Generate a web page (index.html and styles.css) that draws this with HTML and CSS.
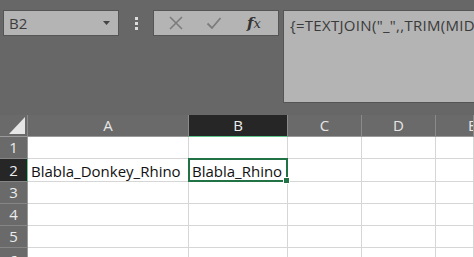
FILE: index.html
```html
<!DOCTYPE html>
<html>
<head>
<meta charset="utf-8">
<link rel="stylesheet" href="styles.css">
</head>
<body>
<div class="toolbar">
  <div class="namebox">
    <span class="name">B2</span>
    <svg class="caret" width="7" height="4" viewBox="0 0 7 4"><path d="M0 0 H7 L3.5 4 Z" fill="#444"/></svg>
  </div>
  <div class="grip"><span></span><span></span><span></span></div>
  <div class="fxbox">
    <svg class="ico" width="16" height="16" viewBox="0 0 16 16"><path d="M2 2 L14 14 M14 2 L2 14" stroke="#7c7c7c" stroke-width="1.6" fill="none"/></svg>
    <svg class="ico" width="16" height="16" viewBox="0 0 16 16"><path d="M1.5 8.5 L6 13 L14.5 3" stroke="#7c7c7c" stroke-width="1.8" fill="none"/></svg>
    <span class="fx">f<i>x</i></span>
  </div>
  <div class="formula">{=TEXTJOIN("_",,TRIM(MID(</div>
</div>
<div class="sheet">
  <div class="corner"><span class="tri"></span></div>
  <div class="ch">A</div>
  <div class="ch sel">B</div>
  <div class="ch">C</div>
  <div class="ch">D</div>
  <div class="ch last">E</div>

  <div class="rh">1</div>
  <div class="c"></div><div class="c"></div><div class="c"></div><div class="c"></div><div class="c"></div>

  <div class="rh sel r2">2</div>
  <div class="c r2">Blabla_Donkey_Rhino</div>
  <div class="c r2 active">Blabla_Rhino<span class="handle"></span></div>
  <div class="c r2"></div><div class="c r2"></div><div class="c r2"></div>

  <div class="rh">3</div>
  <div class="c"></div><div class="c"></div><div class="c"></div><div class="c"></div><div class="c"></div>

  <div class="rh">4</div>
  <div class="c"></div><div class="c"></div><div class="c"></div><div class="c"></div><div class="c"></div>

  <div class="rh">5</div>
  <div class="c"></div><div class="c"></div><div class="c"></div><div class="c"></div><div class="c"></div>

  <div class="rh partial">6</div>
  <div class="c"></div><div class="c"></div><div class="c"></div><div class="c"></div><div class="c"></div>
</div>
</body>
</html>
```

FILE: styles.css
```css
html, body {
  margin: 0;
  padding: 0;
  background: #676767;
  overflow: hidden;
  width: 474px;
  height: 257px;
  font-family: "Open Sans", "Noto Sans", sans-serif;
}

.toolbar {
  display: flex;
  align-items: flex-start;
  padding: 10px 0 0 3px;
  height: 105px;
  box-sizing: border-box;
}

.namebox {
  width: 116px;
  height: 26px;
  box-sizing: border-box;
  background: #b4b4b4;
  border: 1px solid #555;
  display: flex;
  align-items: center;
  justify-content: space-between;
  padding: 0 8px 0 5px;
}

.name {
  font-size: 15px;
  color: #3c3c3c;
}

.grip {
  width: 34px;
  height: 26px;
  display: flex;
  flex-direction: column;
  align-items: center;
  justify-content: center;
  gap: 2px;
}

.grip span {
  width: 3px;
  height: 3px;
  background: #dcdcdc;
}

.fxbox {
  width: 126px;
  height: 26px;
  box-sizing: border-box;
  background: #b4b4b4;
  border: 1px solid #555;
  display: flex;
  align-items: center;
  padding: 0 0 0 14px;
  gap: 22px;
}

.fx {
  font-family: "DejaVu Serif", "Liberation Serif", serif;
  font-style: italic;
  font-weight: bold;
  font-size: 15px;
  color: #333;
  margin-left: 3px;
}

.fx i {
  font-size: 13px;
  font-weight: normal;
}

.formula {
  margin-left: 4px;
  flex: 1;
  height: 93px;
  box-sizing: border-box;
  background: #b4b4b4;
  border: 1px solid #555;
  border-right: none;
  padding: 4px 0 0 6px;
  font-size: 15px;
  letter-spacing: 0.3px;
  color: #3a3a3a;
  white-space: nowrap;
  overflow: hidden;
}

.sheet {
  margin-top: 10px;
  display: grid;
  grid-template-columns: 28px 161px 99px 74px 74px 1fr;
  grid-template-rows: 22px 22px 23px 22px 22px 22px 10px;
  background: #fff;
  overflow: hidden;
}

.corner {
  background: #6a6a6a;
  border-right: 1px solid #8a8a8a;
  border-bottom: 1px solid #9a9a9a;
  position: relative;
}

.tri {
  position: absolute;
  right: 2px;
  bottom: 2px;
  width: 0;
  height: 0;
  border-left: 16px solid transparent;
  border-bottom: 17px solid #e6e6e6;
}

.ch {
  background: #6a6a6a;
  color: #e6e6e6;
  border-right: 1px solid #8a8a8a;
  border-bottom: 1px solid #9a9a9a;
  font-size: 15px;
  display: flex;
  align-items: center;
  justify-content: center;
  line-height: 1;
}

.ch.sel {
  background: #262626;
  color: #ededed;
  border-bottom: 1px solid #5fc48a;
}

.ch.last {
  justify-content: flex-start;
  padding-left: 32px;
  overflow: hidden;
}

.rh {
  background: #6a6a6a;
  color: #ececec;
  border-right: 1px solid #9a9a9a;
  border-bottom: 1px solid #858585;
  font-size: 15px;
  display: flex;
  align-items: center;
  justify-content: center;
  line-height: 1;
}

.rh.partial {
  align-items: flex-start;
  padding-top: 5px;
  overflow: hidden;
  border-bottom: none;
}

.rh.sel {
  background: #262626;
  border-right: 1px solid #5fc48a;
}

.c {
  border-right: 1px solid #d6d6d6;
  border-bottom: 1px solid #d6d6d6;
  font-size: 15px;
  color: #111;
  display: flex;
  align-items: flex-end;
  padding: 0 0 0 3px;
  line-height: 20px;
  white-space: nowrap;
}

.active {
  position: relative;
}

.active::after {
  content: "";
  position: absolute;
  left: -1px;
  top: -1px;
  right: -1px;
  bottom: -1px;
  border: 2px solid #217346;
}

.handle {
  position: absolute;
  right: -3px;
  bottom: -3px;
  width: 5px;
  height: 5px;
  background: #217346;
  border: 1px solid #fff;
  z-index: 2;
}
```
